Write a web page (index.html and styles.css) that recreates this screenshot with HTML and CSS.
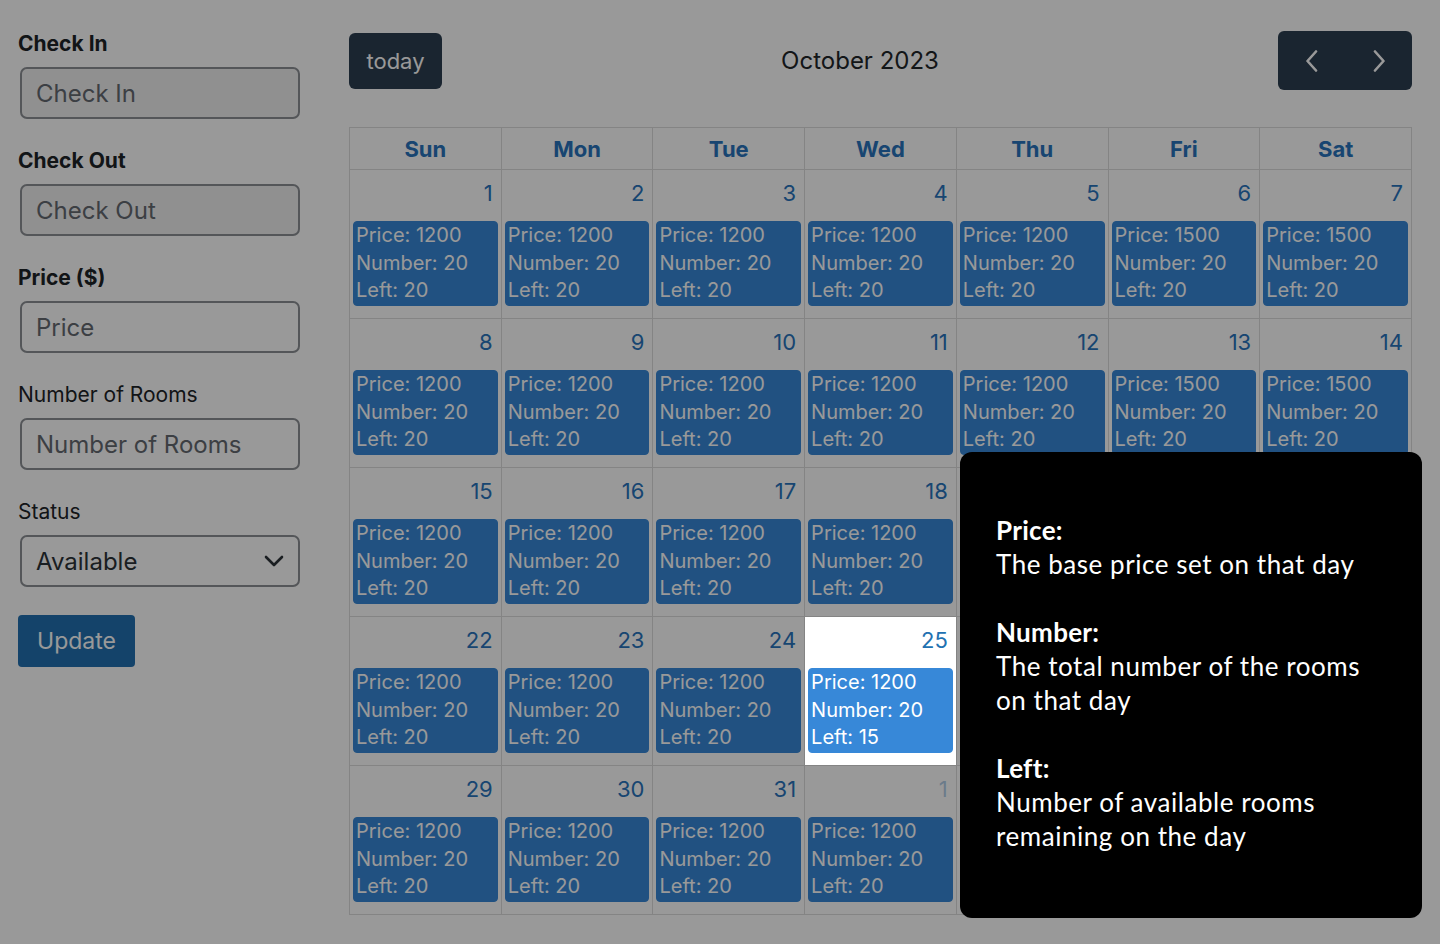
FILE: index.html
```html
<!DOCTYPE html>
<html lang="en">
<head>
<meta charset="utf-8">
<title>Availability calendar</title>
<link rel="stylesheet" href="styles.css">
</head>
<body>
<div class="page">
  <aside class="form">
    <div class="field">
      <label class="lbl lbl-bold">Check In</label>
      <input class="inp inp-ro" placeholder="Check In" readonly>
    </div>
    <div class="field">
      <label class="lbl lbl-bold">Check Out</label>
      <input class="inp inp-ro" placeholder="Check Out" readonly>
    </div>
    <div class="field">
      <label class="lbl lbl-bold">Price ($)</label>
      <input class="inp" placeholder="Price">
    </div>
    <div class="field">
      <label class="lbl">Number of Rooms</label>
      <input class="inp" placeholder="Number of Rooms">
    </div>
    <div class="field">
      <label class="lbl">Status</label>
      <div class="inp select">
        <span>Available</span>
        <svg class="chev-down" width="20" height="12" viewBox="0 0 20 12"><polyline points="2,2 10,10 18,2" fill="none" stroke="currentColor" stroke-width="2.6" stroke-linecap="round" stroke-linejoin="round"/></svg>
      </div>
    </div>
    <button class="btn-update">Update</button>
  </aside>

  <main class="cal">
    <div class="toolbar">
      <button class="btn-dark btn-today">today</button>
      <h2 class="title">October 2023</h2>
      <div class="nav">
        <button class="btn-dark btn-nav" aria-label="prev"><svg width="14" height="22" viewBox="0 0 14 22"><polyline points="11,1.5 2.5,11 11,20.5" fill="none" stroke="currentColor" stroke-width="2.6" stroke-linecap="round" stroke-linejoin="round"/></svg></button>
        <button class="btn-dark btn-nav" aria-label="next"><svg width="14" height="22" viewBox="0 0 14 22"><polyline points="3,1.5 11.5,11 3,20.5" fill="none" stroke="currentColor" stroke-width="2.6" stroke-linecap="round" stroke-linejoin="round"/></svg></button>
      </div>
    </div>

    <table class="grid">
      <thead>
        <tr><th>Sun</th><th>Mon</th><th>Tue</th><th>Wed</th><th>Thu</th><th>Fri</th><th>Sat</th></tr>
      </thead>
      <tbody>
        <tr>
          <td><div class="day"><div class="num">1</div><div class="ev">Price: 1200<br>Number: 20<br>Left: 20</div></div></td>
          <td><div class="day"><div class="num">2</div><div class="ev">Price: 1200<br>Number: 20<br>Left: 20</div></div></td>
          <td><div class="day"><div class="num">3</div><div class="ev">Price: 1200<br>Number: 20<br>Left: 20</div></div></td>
          <td><div class="day"><div class="num">4</div><div class="ev">Price: 1200<br>Number: 20<br>Left: 20</div></div></td>
          <td><div class="day"><div class="num">5</div><div class="ev">Price: 1200<br>Number: 20<br>Left: 20</div></div></td>
          <td><div class="day"><div class="num">6</div><div class="ev">Price: 1500<br>Number: 20<br>Left: 20</div></div></td>
          <td><div class="day"><div class="num">7</div><div class="ev">Price: 1500<br>Number: 20<br>Left: 20</div></div></td>
        </tr>
        <tr>
          <td><div class="day"><div class="num">8</div><div class="ev">Price: 1200<br>Number: 20<br>Left: 20</div></div></td>
          <td><div class="day"><div class="num">9</div><div class="ev">Price: 1200<br>Number: 20<br>Left: 20</div></div></td>
          <td><div class="day"><div class="num">10</div><div class="ev">Price: 1200<br>Number: 20<br>Left: 20</div></div></td>
          <td><div class="day"><div class="num">11</div><div class="ev">Price: 1200<br>Number: 20<br>Left: 20</div></div></td>
          <td><div class="day"><div class="num">12</div><div class="ev">Price: 1200<br>Number: 20<br>Left: 20</div></div></td>
          <td><div class="day"><div class="num">13</div><div class="ev">Price: 1500<br>Number: 20<br>Left: 20</div></div></td>
          <td><div class="day"><div class="num">14</div><div class="ev">Price: 1500<br>Number: 20<br>Left: 20</div></div></td>
        </tr>
        <tr>
          <td><div class="day"><div class="num">15</div><div class="ev">Price: 1200<br>Number: 20<br>Left: 20</div></div></td>
          <td><div class="day"><div class="num">16</div><div class="ev">Price: 1200<br>Number: 20<br>Left: 20</div></div></td>
          <td><div class="day"><div class="num">17</div><div class="ev">Price: 1200<br>Number: 20<br>Left: 20</div></div></td>
          <td><div class="day"><div class="num">18</div><div class="ev">Price: 1200<br>Number: 20<br>Left: 20</div></div></td>
          <td><div class="day"></div></td>
          <td><div class="day"></div></td>
          <td><div class="day"></div></td>
        </tr>
        <tr>
          <td><div class="day"><div class="num">22</div><div class="ev">Price: 1200<br>Number: 20<br>Left: 20</div></div></td>
          <td><div class="day"><div class="num">23</div><div class="ev">Price: 1200<br>Number: 20<br>Left: 20</div></div></td>
          <td><div class="day"><div class="num">24</div><div class="ev">Price: 1200<br>Number: 20<br>Left: 20</div></div></td>
          <td class="spot"><div class="day"><div class="num">25</div><div class="ev">Price: 1200<br>Number: 20<br>Left: 15</div></div></td>
          <td><div class="day"></div></td>
          <td><div class="day"></div></td>
          <td><div class="day"></div></td>
        </tr>
        <tr>
          <td><div class="day"><div class="num">29</div><div class="ev">Price: 1200<br>Number: 20<br>Left: 20</div></div></td>
          <td><div class="day"><div class="num">30</div><div class="ev">Price: 1200<br>Number: 20<br>Left: 20</div></div></td>
          <td><div class="day"><div class="num">31</div><div class="ev">Price: 1200<br>Number: 20<br>Left: 20</div></div></td>
          <td><div class="day"><div class="num num-other">1</div><div class="ev">Price: 1200<br>Number: 20<br>Left: 20</div></div></td>
          <td><div class="day"></div></td>
          <td><div class="day"></div></td>
          <td><div class="day"></div></td>
        </tr>
      </tbody>
    </table>
  </main>
</div>

<div class="overlay"></div>

<div class="tip">
  <p><b>Price:</b><br>The base price set on that day</p>
  <p><b>Number:</b><br>The total number of the rooms<br>on that day</p>
  <p><b>Left:</b><br>Number of available rooms<br>remaining on the day</p>
</div>
</body>
</html>
```

FILE: styles.css
```css
* { box-sizing: border-box; }

html, body {
  margin: 0;
  padding: 0;
  background: #ffffff;
  font-family: Inter, "Liberation Sans", Arial, sans-serif;
  color: #1d2327;
}

.page {
  display: flex;
  gap: 49px;
  padding: 31px 28px 0 18px;
  min-height: 944px;
}

/* ---------- left form ---------- */
.form {
  width: 282px;
  flex: none;
  padding-top: 1px;
}

.field {
  display: flex;
  flex-direction: column;
  margin-bottom: 30px;
}

.lbl {
  font-size: 21px;
  line-height: 24px;
  color: #1d2327;
  margin-bottom: 11px;
}

.lbl-bold { font-weight: 700; }

.inp {
  width: 280px;
  height: 52px;
  margin-left: 2px;
  border: 2px solid #8c8f94;
  border-radius: 7px;
  background: #ffffff;
  padding: 0 14px;
  font-family: inherit;
  font-size: 24px;
  color: #2c3338;
  outline: none;
}

.inp::placeholder { color: #646970; }

.inp-ro { background: #f0f0f1; }

.select {
  display: flex;
  align-items: center;
  justify-content: space-between;
  padding-right: 14px;
  color: #2c3338;
}

.chev-down { color: #2c3338; }

.btn-update {
  margin-top: -2px;
  width: 117px;
  height: 52px;
  border: none;
  border-radius: 4px;
  background: #2271b1;
  color: #ffffff;
  font-family: inherit;
  font-size: 23px;
  padding: 0;
}

/* ---------- calendar ---------- */
.cal {
  flex: 1;
  min-width: 0;
}

.toolbar {
  display: flex;
  align-items: center;
  justify-content: space-between;
  height: 59px;
  margin-bottom: 37px;
}

.btn-dark {
  background: #2c3e50;
  color: #ffffff;
  border: none;
  font-family: inherit;
}

.btn-today {
  width: 93px;
  height: 56px;
  border-radius: 6px;
  font-size: 22px;
  padding: 0;
}

.title {
  margin: 0;
  font-size: 24px;
  font-weight: 400;
  color: #212529;
}

.nav {
  display: flex;
  height: 59px;
  border-radius: 6px;
  overflow: hidden;
}

.btn-nav {
  width: 67px;
  height: 59px;
  display: flex;
  align-items: center;
  justify-content: center;
  padding: 0;
}

.grid {
  width: 100%;
  table-layout: fixed;
  border-collapse: collapse;
  border: 1px solid #dddddd;
}

.grid th {
  height: 42px;
  border: 1px solid #dddddd;
  font-size: 22px;
  font-weight: 700;
  color: #2874bd;
  padding: 0;
  vertical-align: middle;
}

.grid td {
  border: 1px solid #dddddd;
  padding: 0;
  vertical-align: top;
}

.day {
  height: 148px;
  padding: 0 3px;
}

.num {
  text-align: right;
  font-size: 22px;
  line-height: 26px;
  padding: 10px 5px 0 0;
  color: #2874bd;
}

.num-other { opacity: 0.35; }

.ev {
  margin-top: 15px;
  background: #3788d8;
  border: 1px solid #3788d8;
  border-radius: 4px;
  color: #ffffff;
  font-size: 20px;
  line-height: 27.5px;
  padding: 0 2px;
  white-space: nowrap;
  overflow: hidden;
}

/* ---------- spotlight overlay ---------- */
.overlay {
  position: fixed;
  inset: 0;
  background: rgba(0, 0, 0, 0.4);
  z-index: 10;
}

.grid td.spot {
  position: relative;
  z-index: 11;
  background: #ffffff;
}

.spot .num { color: #2271b1; }

.tip {
  position: absolute;
  left: 960px;
  top: 452px;
  width: 462px;
  height: 466px;
  z-index: 12;
  background: #000000;
  border-radius: 12px;
  color: #ffffff;
  padding: 61px 20px 0 36px;
  font-family: Lato, "Noto Sans", sans-serif;
  font-size: 26px;
  line-height: 34px;
  letter-spacing: 0.55px;
}

.tip p { margin: 0 0 34px; }

.tip b { font-weight: 700; letter-spacing: 0.3px; }
```
